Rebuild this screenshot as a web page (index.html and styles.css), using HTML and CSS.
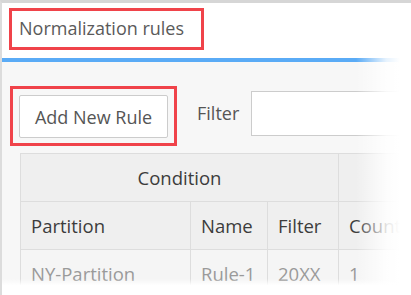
FILE: index.html
```html
<!DOCTYPE html>
<html>
<head>
<meta charset="utf-8">
<link rel="stylesheet" href="styles.css">
</head>
<body>
<div class="frame">
  <div class="header">
    <div class="title-box"><span class="title">Normalization rules</span></div>
  </div>
  <div class="content">
    <div class="toolbar">
      <div class="btn-box"><button class="btn">Add New Rule</button></div>
      <label class="filter-label">Filter</label>
      <div class="filter-input"></div>
    </div>
    <table class="rules">
      <colgroup>
        <col class="w-part">
        <col class="w-name">
        <col class="w-filter">
        <col class="w-count">
      </colgroup>
      <tr class="group-row">
        <th colspan="3" class="group">Condition</th>
        <th class="blank"></th>
      </tr>
      <tr class="head-row">
        <th>Partition</th>
        <th>Name</th>
        <th>Filter</th>
        <th>Country</th>
      </tr>
      <tr class="data-row">
        <td>NY-Partition</td>
        <td>Rule-1</td>
        <td>20XX</td>
        <td>1</td>
      </tr>
    </table>
  </div>
  <div class="fade-right"></div>
  <div class="fade-bottom"></div>
</div>
</body>
</html>
```
FILE: styles.css
```css
html, body {
  margin: 0;
  padding: 0;
  background: #ffffff;
}
body {
  width: 411px;
  height: 295px;
  overflow: hidden;
  font-family: "Open Sans", "Noto Sans", sans-serif;
}
.frame {
  position: relative;
  width: 411px;
  height: 295px;
  overflow: hidden;
  box-sizing: border-box;
  border-left: 2px solid #dcdcdc;
  border-top: 3px solid #d6d6d6;
  background: #f7f7f7;
}
.header {
  background: #ffffff;
  border-bottom: 4px solid #5aabf6;
  padding: 5px 0 0 7px;
  box-sizing: border-box;
  height: 59px;
}
.title-box {
  width: 195px;
  height: 42px;
  box-sizing: border-box;
  border: 3px solid #f0434a;
  display: flex;
  align-items: center;
  padding-left: 7px;
}
.title {
  font-size: 18px;
  color: #5a5a5a;
  line-height: 1;
  margin-top: -2px;
}
.content {
  padding: 24px 0 0 8px;
}
.toolbar {
  display: flex;
  align-items: center;
  height: 60px;
}
.btn-box {
  width: 167px;
  height: 60px;
  box-sizing: border-box;
  border: 3px solid #f0434a;
  padding: 6px;
  display: flex;
}
.btn {
  width: 151px;
  height: 43px;
  box-sizing: border-box;
  background: #ffffff;
  border: 1px solid #cccccc;
  border-radius: 2px;
  font-family: "Open Sans", "Noto Sans", sans-serif;
  font-size: 18px;
  color: #555555;
  padding: 0;
}
.filter-label {
  margin-left: 20px;
  font-size: 18px;
  color: #555555;
  margin-top: -6px;
}
.filter-input {
  margin-left: 12px;
  width: 200px;
  height: 45px;
  box-sizing: border-box;
  background: #ffffff;
  border: 1px solid #cccccc;
  margin-top: -6px;
}
.rules {
  margin-left: 10px;
  margin-top: 7px;
  border-collapse: collapse;
  table-layout: fixed;
  width: 440px;
  font-size: 18.5px;
}
.w-part { width: 170px; }
.w-name { width: 77px; }
.w-filter { width: 71px; }
.w-count { width: 122px; }
.rules th, .rules td {
  border: 1px solid #dddddd;
  height: 47px;
  padding: 0 10px;
  text-align: left;
  white-space: nowrap;
  overflow: hidden;
}
.rules th {
  background: #efefef;
  color: #3c3c3c;
  font-weight: 400;
}
.rules .group {
  text-align: center;
}
.rules td {
  background: #f5f5f5;
  color: #9a9a9a;
}
.fade-right {
  position: absolute;
  top: 0;
  right: 0;
  width: 55px;
  height: 100%;
  background: linear-gradient(to right, rgba(255,255,255,0) 0%, rgba(255,255,255,0.85) 55%, #ffffff 80%);
}
.fade-bottom {
  position: absolute;
  left: 0;
  bottom: 0;
  width: 100%;
  height: 16px;
  background: linear-gradient(to bottom, rgba(255,255,255,0) 0%, #ffffff 40%, #ffffff 100%);
}
```
